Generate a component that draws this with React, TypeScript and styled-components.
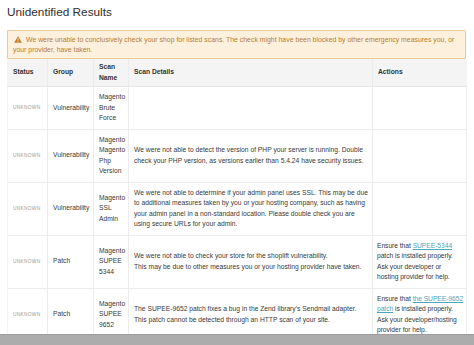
import React from 'react';
import styled, { createGlobalStyle } from 'styled-components';

// TYPES
interface ScanRow {
    group: string;
    name: string[];
    details: React.ReactNode;
    action?: React.ReactNode;
}

// STYLES
const GlobalStyle = createGlobalStyle`
    html, body {
        margin: 0;
        padding: 0;
        background: #ffffff;
    }
    body {
        font-family: 'Liberation Sans', Arial, sans-serif;
        color: #333333;
        overflow: hidden;
    }
`;

const Page = styled.div`
    padding: 4px 8px 0 7px;
    height: 345px;
    box-sizing: border-box;
`;

const Title = styled.h2`
    margin: 0 0 9px;
    font-size: 11.8px;
    font-weight: 400;
    line-height: 17px;
    color: #303030;
`;

const Warning = styled.div`
    display: block;
    background: #fdf0dd;
    border: 1px solid #ecc995;
    border-radius: 1px;
    padding: 4px 6px 4px 5px;
    font-size: 6.9px;
    line-height: 9.5px;
    color: #b97c33;
`;

const WarnIcon = styled.svg`
    width: 8px;
    height: 7px;
    vertical-align: -1px;
    margin-right: 4px;
    margin-left: 1px;
`;

const Table = styled.table`
    width: 100%;
    border-collapse: collapse;
    table-layout: fixed;
    font-size: 6.72px;
    line-height: 10.5px;
    color: #3a3a3a;
`;

const HeadCell = styled.th<{ $w: number }>`
    box-sizing: border-box;
    width: ${({ $w }) => $w}px;
    background: #f4f4f4;
    text-align: left;
    font-weight: 700;
    padding: 3px 3px 3px 5px;
    border-left: 1px solid #ececec;
    border-bottom: 1px solid #e6e6e6;
    vertical-align: middle;
    color: #333333;
    &:first-child { border-left: 1px solid #f4f4f4; }
`;

const Cell = styled.td`
    box-sizing: border-box;
    padding: 5px 3px 5px 5px;
    border-left: 1px solid #ececec;
    border-bottom: 1px solid #ececec;
    vertical-align: middle;
    &:first-child { border-left: 1px solid #f4f4f4; }
    &:last-child { border-right: 1px solid #ececec; }
`;

const ActionCell = styled(Cell)`
    padding-left: 4px;
    padding-right: 1px;
    letter-spacing: -0.05px;
    white-space: nowrap;
`;

const Status = styled.span`
    font-size: 4.8px;
    letter-spacing: 0.3px;
    color: #9a9a9a;
`;

const Link = styled.a`
    color: #4ea6bd;
    text-decoration: underline;
`;

const BottomBar = styled.div`
    position: fixed;
    left: 0;
    right: 0;
    bottom: 0;
    height: 10px;
    background: #acacac;
    border-top: 1px solid #9c9c9c;
`;

// DATA
const rows: ScanRow[] = [
    { group: 'Vulnerability', name: ['Magento', 'Brute', 'Force'], details: null },
    {
        group: 'Vulnerability',
        name: ['Magento', 'Magento', 'Php', 'Version'],
        details: (
            <>
                We were not able to detect the version of PHP your server is running. Double
                check your PHP version, as versions earlier than 5.4.24 have security issues.
            </>
        ),
    },
    {
        group: 'Vulnerability',
        name: ['Magento', 'SSL', 'Admin'],
        details: (
            <>
                We were not able to determine if your admin panel uses SSL. This may be due
                to additional measures taken by you or your hosting company, such as having
                your admin panel in a non-standard location. Please double check you are
                using secure URLs for your admin.
            </>
        ),
    },
    {
        group: 'Patch',
        name: ['Magento', 'SUPEE', '5344'],
        details: (
            <>
                We were not able to check your store for the shoplift vulnerability.
                <br />
                This may be due to other measures you or your hosting provider have taken.
            </>
        ),
        action: (
            <>
                Ensure that <Link href="#">SUPEE-5344</Link>
                <br />
                patch is installed properly.
                <br />
                Ask your developer or
                <br />
                hosting provider for help.
            </>
        ),
    },
    {
        group: 'Patch',
        name: ['Magento', 'SUPEE', '9652'],
        details: (
            <>
                The SUPEE-9652 patch fixes a bug in the Zend library's Sendmail adapter.
                <br />
                This patch cannot be detected through an HTTP scan of your site.
            </>
        ),
        action: (
            <>
                Ensure that <Link href="#">the SUPEE-9652</Link>
                <br />
                <Link href="#">patch</Link> is installed properly.
                <br />
                Ask your developer/hosting
                <br />
                provider for help.
            </>
        ),
    },
];

// COMPONENT DEFINITION
export default function App(): JSX.Element {
    return (
        <Page>
            <GlobalStyle />
            <Title>Unidentified Results</Title>
            <Warning>
                <WarnIcon viewBox="0 0 16 14">
                    <path d="M8 0.5 L15.6 13.5 H0.4 Z" fill="#c47a22" />
                    <rect x="7.1" y="4.5" width="1.8" height="5" fill="#fdf0dd" />
                    <rect x="7.1" y="10.6" width="1.8" height="1.8" fill="#fdf0dd" />
                </WarnIcon>
                We were unable to conclusively check your shop for listed scans. The check might
                have been blocked by other emergency measures you, or your provider, have taken.
            </Warning>
            <Table>
                <thead>
                    <tr>
                        <HeadCell $w={40}>Status</HeadCell>
                        <HeadCell $w={46}>Group</HeadCell>
                        <HeadCell $w={35}>Scan Name</HeadCell>
                        <HeadCell $w={244}>Scan Details</HeadCell>
                        <HeadCell $w={94}>Actions</HeadCell>
                    </tr>
                </thead>
                <tbody>
                    {rows.map((row, i) => (
                        <tr key={i}>
                            <Cell>
                                <Status>UNKNOWN</Status>
                            </Cell>
                            <Cell>{row.group}</Cell>
                            <Cell>
                                {row.name.map((n, j) => (
                                    <div key={j}>{n}</div>
                                ))}
                            </Cell>
                            <Cell>{row.details}</Cell>
                            <ActionCell>{row.action}</ActionCell>
                        </tr>
                    ))}
                </tbody>
            </Table>
            <BottomBar />
        </Page>
    );
}
